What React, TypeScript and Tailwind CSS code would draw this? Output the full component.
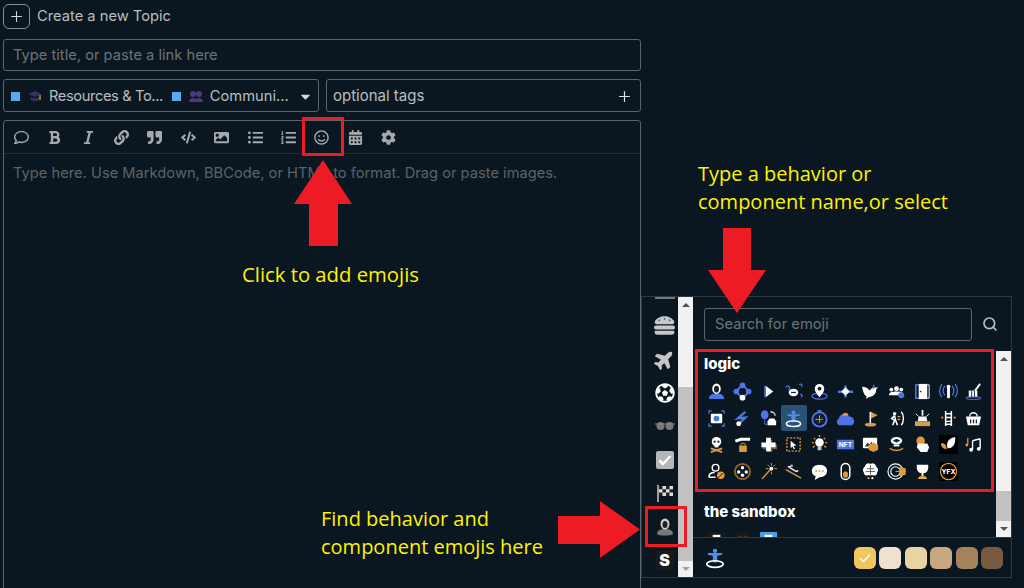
import type { ReactNode } from 'react';
import {
  FaRegComment, FaBold, FaItalic, FaLink, FaQuoteRight, FaCode, FaImage, FaListUl, FaListOl, FaRegSmile,
  FaCalendarAlt, FaCog, FaHamburger, FaPlane, FaFutbol, FaCaretDown,
} from 'react-icons/fa';
import { FiSearch } from 'react-icons/fi';
import { Plus } from 'lucide-react';

const B = '#4f74e8';
const O = '#e09a3a';
const W = '#ffffff';

function Svg({ children, s = 20 }: { children: ReactNode; s?: number }) {
  return <svg width={s} height={s} viewBox="0 0 20 20">{children}</svg>;
}

const Pedestal = () => (
  <>
    <circle cx="10" cy="3.5" r="2" fill="#4f8fe8" />
    <path d="M3.5 5.5 L16.5 5.5 L16.5 7 L12 8 L12 14 L8 14 L8 8 L3.5 7 Z" fill="#4f8fe8" />
    <ellipse cx="10" cy="15.5" rx="7.5" ry="3" fill="none" stroke={W} strokeWidth="1.5" />
  </>
);

const row1: ReactNode[] = [
  <><path d="M2 18c0-5 4-6 8-6s8 1 8 6z" fill={B} /><ellipse cx="10" cy="7" rx="4.5" ry="5.5" fill={W} /><ellipse cx="10" cy="7.5" rx="2.6" ry="3.6" fill="#16202a" /></>,
  <><path d="M10 3l7 7-7 7-7-7z" fill="none" stroke={B} strokeWidth="2" /><circle cx="10" cy="3.5" r="3" fill={B} /><circle cx="3.5" cy="10" r="3" fill={B} /><circle cx="16.5" cy="10" r="3" fill={B} /><circle cx="10" cy="16.5" r="3" fill={W} /></>,
  <><path d="M7 4l8 6-8 6z" fill={W} /><path d="M5.500 4h1.500v12H5.500z" fill={B} /></>,
  <><ellipse cx="10" cy="11" rx="5" ry="4" fill={W} /><path d="M7.5 11h5" stroke="#16202a" strokeWidth="1.3" /><path d="M2 6a2 2 0 1 1 3 2v1M16 3a1.5 1.5 0 1 1 2 2M17 13a1.5 1.5 0 1 1 1 3" fill="none" stroke={B} strokeWidth="1.3" /></>,
  <><ellipse cx="10" cy="15" rx="8" ry="3" fill="none" stroke={B} strokeWidth="1.2" /><path d="M10 16c-3-4-5-6-5-9a5 5 0 0 1 10 0c0 3-2 5-5 9z" fill={W} /><circle cx="10" cy="7" r="2" fill="#16202a" /></>,
  <><path d="M10 3l2 3H8z" fill={B} /><path d="M10 17l2-3H8z" fill={B} /><rect x="2" y="9" width="16" height="2.6" fill={B} /><path d="M10 5.5l4.5 4.5-4.5 4.5L5.5 10z" fill={W} /></>,
  <><path d="M1 5c3 0 6 1 8 4l4-4 3 1 2-1-2 3c0 5-4 8-8 8l-3 2 1-3C3 14 2 9 1 5z" fill={W} /><path d="M13 2l2 4-3 2z" fill={B} /></>,
  <><circle cx="10" cy="7" r="2.5" fill={W} /><circle cx="4.5" cy="8" r="2" fill={W} /><circle cx="15" cy="8" r="2" fill={W} /><path d="M2 14c0-3 3-4 8-4s7 1 7 3v1z" fill={W} /><circle cx="15" cy="14" r="3.2" fill={B} /></>,
  <><path d="M6 3H3v14h3" fill="none" stroke={B} strokeWidth="1.6" /><rect x="6" y="2" width="9" height="16" fill={W} /><circle cx="8" cy="10" r="0.9" fill="#16202a" /><path d="M15 3h2v14h-2" fill="none" stroke={W} strokeWidth="1" /></>,
  <><rect x="8.5" y="6" width="3" height="11" rx="1" fill={W} /><circle cx="10" cy="5" r="2" fill={W} /><path d="M6 4c-2 3-2 7 0 10M14 4c2 3 2 7 0 10M3 2c-3 5-3 10 0 14M17 2c3 5 3 10 0 14" fill="none" stroke={B} strokeWidth="1.3" /></>,
  <><path d="M17 2l-6 8" stroke={W} strokeWidth="2" /><rect x="5" y="9" width="9" height="7" fill={W} /><path d="M8 9v7M11 9v7" stroke="#16202a" /><ellipse cx="10" cy="17" rx="8" ry="1.5" fill="none" stroke={B} /></>,
];

const row2: ReactNode[] = [
  <><path d="M2 5V2h3M15 2h3v3M2 15v3h3M18 15v3h-3" fill="none" stroke={B} strokeWidth="1.3" /><rect x="4" y="5" width="12" height="10" rx="1" fill={W} /><circle cx="10" cy="10" r="3" fill="#3d7fd8" /></>,
  <><path d="M13 3L5 10l8-1-6 6" fill="none" stroke={B} strokeWidth="2.4" /><circle cx="6" cy="15.5" r="2.6" fill={W} /></>,
  <><ellipse cx="6" cy="6" rx="4" ry="4.8" fill={B} /><path d="M6 11v5h3" fill="none" stroke={B} /><path d="M12 3c3 0 5 2 5 4" fill="none" stroke={W} strokeWidth="1.2" /><path d="M9 13l2-3h5l2 3v4H9z" fill={W} /></>,
  <Pedestal />,
  <><circle cx="10" cy="11" r="7.5" fill="none" stroke={B} strokeWidth="2" /><circle cx="10" cy="11" r="5" fill="#1b2330" /><path d="M6 11h8M10 7v8" stroke={W} strokeWidth="1" strokeDasharray="1 1" /><rect x="8" y="1" width="4" height="2" fill={B} /></>,
  <><path d="M3 17a4 4 0 0 1 0-7 6 6 0 0 1 11-2 5 5 0 0 1 3 9z" fill={B} /><path d="M7 7a3 3 0 0 1 6 0z" fill={O} /></>,
  <><rect x="9" y="3" width="1.6" height="13" fill={W} /><path d="M10.5 3l7 3.5-7 3.5z" fill={O} /><ellipse cx="10" cy="16.5" rx="6" ry="2" fill={O} /></>,
  <><path d="M15 3c3 3 3 11 0 14" fill="none" stroke={W} strokeWidth="1.5" /><circle cx="8" cy="5" r="1.8" fill={W} /><path d="M8 7l-3 3 3 2-2 5M8 7l1 5 2 5" fill="none" stroke={W} strokeWidth="1.6" /><path d="M11 8h3M11 11h3" stroke={O} strokeWidth="1.4" /></>,
  <><path d="M10 1v6" stroke={W} strokeWidth="1.8" /><path d="M6 8h8l1 5H5z" fill={W} /><rect x="2" y="13" width="16" height="5" fill="#d2a050" /><path d="M3 5l3 3M17 5l-3 3" stroke={W} /></>,
  <><path d="M7 2v16M13 2v16" stroke={W} strokeWidth="1.6" /><path d="M7 5h6M7 9h6M7 13h6M7 16h6" stroke={W} strokeWidth="1.5" /><circle cx="3.5" cy="9" r="1.2" fill={O} /><circle cx="16.5" cy="9" r="1.2" fill={O} /></>,
  <><path d="M6 8a4 4 0 0 1 8 0" fill="none" stroke={W} strokeWidth="1.5" /><path d="M2 8h16l-2 9H4z" fill={W} /><path d="M7 11v4M10 11v4M13 11v4" stroke="#16202a" strokeWidth="1.3" /></>,
];

const row3: ReactNode[] = [
  <><path d="M4 14l12 4M16 14L4 18" stroke={O} strokeWidth="2" /><circle cx="10" cy="7" r="5" fill={W} /><rect x="8" y="10" width="4" height="3" fill={W} /><circle cx="8" cy="7" r="1.2" fill="#16202a" /><circle cx="12" cy="7" r="1.2" fill="#16202a" /></>,
  <><path d="M2 5l6-2h10v3H9L3 8z" fill={W} /><path d="M8 11a2.5 2.5 0 0 1 5 0" fill="none" stroke={O} /><rect x="6.5" y="11" width="8" height="7" rx="1" fill={O} /></>,
  <><path d="M8 5h6v5h5v5h-5v3H8v-3H4v-5h4z" fill="#7a5a3c" /><path d="M7.5 3h5v5h5v5h-5v4h-5v-4h-5V8h5z" fill={W} /></>,
  <><rect x="3" y="3" width="14" height="14" fill="none" stroke={O} strokeWidth="1.5" strokeDasharray="2 1.5" /><path d="M7 6l6 5-3 .5 1.6 3-1.3.6-1.5-3L7 14z" fill={W} /></>,
  <><circle cx="10" cy="8" r="4.5" fill={W} /><rect x="8" y="12" width="4" height="4" fill="#c0c4c8" /><path d="M10 0v2M2 8h2M16 8h2M4 3l1.500 1.500M16 3l-1.500 1.500M3 13l2-1.500M17 13l-2-1.500" stroke={O} strokeWidth="1.4" /></>,
  <><rect x="1" y="5" width="18" height="10" fill={B} /><text x="10" y="12.800" textAnchor="middle" fontSize="7" fontWeight="700" fill={W} fontFamily="Inter, sans-serif">NFT</text></>,
  <><rect x="2" y="3" width="15" height="11" rx="1" fill={W} /><path d="M4 12l3-4 2 2 2-3 3 5z" fill="#333" /><path d="M13 8l5 2.500v5L13 18l-5-2.500v-5z" fill={O} /></>,
  <><ellipse cx="10" cy="6" rx="6" ry="4" fill={W} /><path d="M6 6l4-2 4 2-4 2z" fill="#16202a" /><path d="M7 10h6v2H7z" fill={W} /><path d="M3 14c3 3 11 3 14 0" fill="none" stroke={O} strokeWidth="1.500" /></>,
  <><circle cx="8" cy="6" r="4.500" fill={O} /><path d="M5 9h10l2 4-2 5H8l-4-5z" fill={W} /></>,
  <><rect width="20" height="20" fill="#000" /><path d="M17 2C11 3 7 7 9 14c5 0 9-4 8-12z" fill={W} /><path d="M2 9c4-1 6 2 6 6-3 0-6-2-6-6z" fill={O} /></>,
  <><path d="M9 6v9M17 4v10M9 6l8-2" fill="none" stroke={W} strokeWidth="1.500" /><circle cx="7.500" cy="15.500" r="2" fill={W} /><circle cx="15.500" cy="14.500" r="2" fill={W} /><path d="M4 3v7" stroke={O} strokeWidth="1.300" /><circle cx="3" cy="10.500" r="1.500" fill={O} /></>,
];

const row4: ReactNode[] = [
  <><circle cx="9" cy="6" r="3.500" fill="none" stroke={W} strokeWidth="1.500" /><path d="M2 16c0-4 3-5 6-5" fill="none" stroke={W} strokeWidth="1.500" /><path d="M2 16h7" stroke={W} strokeWidth="1.500" /><circle cx="14.500" cy="14" r="4" fill={O} /><path d="M12 16.500l5-5" stroke="#16202a" /></>,
  <><circle cx="10" cy="10" r="8" fill="none" stroke="#96602c" strokeWidth="2" /><circle cx="10" cy="6" r="1.800" fill={W} /><circle cx="6" cy="10.500" r="1.800" fill={W} /><circle cx="14" cy="10.500" r="1.800" fill={W} /><circle cx="10" cy="14" r="1.800" fill={W} /></>,
  <><path d="M3 18L12 8" stroke="#c99540" strokeWidth="1.500" /><circle cx="13" cy="7" r="2" fill={W} /><path d="M13 1v3M13 10v3M7 7h3M16 7h3M9 3l2 2M17 3l-2 2" stroke={O} strokeWidth="1" /></>,
  <><path d="M2 8l16 9" stroke="#c99540" strokeWidth="1.500" /><circle cx="8" cy="4" r="1.500" fill="#aab" /><path d="M6 6l7 4 2-1M4 5l3 0" stroke={W} strokeWidth="1.500" fill="none" /></>,
  <><path d="M10 3c5 0 8 3 8 6.500S15 16 10 16l-5 3 1-4C3 14 2 12 2 9.500 2 6 5 3 10 3z" fill={W} /><circle cx="6.500" cy="9.500" r="1" fill={O} /><circle cx="10" cy="9.500" r="1" fill={O} /><circle cx="13.500" cy="9.500" r="1" fill={O} /></>,
  <><rect x="5.500" y="1.500" width="9" height="17" rx="4.500" fill="none" stroke={W} strokeWidth="1.600" /><rect x="7.500" y="10" width="5" height="6.500" rx="2" fill={O} /></>,
  <><path d="M10 2a4 4 0 0 0-6 3 4 4 0 0 0-1 6 3 3 0 0 0 4 3h6a3 3 0 0 0 4-3 4 4 0 0 0-1-6 4 4 0 0 0-6-3z" fill={W} /><path d="M10 3v10M6 7h8M5 10h10" stroke="#444" strokeWidth="0.800" /><circle cx="8" cy="17" r="1.200" fill={O} /><circle cx="12" cy="17" r="1.200" fill={W} /></>,
  <><circle cx="9" cy="10" r="8" fill="none" stroke={W} strokeWidth="1.200" /><circle cx="9" cy="10" r="5" fill="none" stroke={W} strokeWidth="1.200" /><path d="M9 10h11M14 6v8l5-1V7z" stroke={O} fill={O} strokeWidth="1.300" /></>,
  <><path d="M4 3h12v3c0 4-3 6-6 6S4 10 4 6z" fill={W} /><rect x="9" y="11" width="2" height="4" fill={W} /><path d="M5 18l2-3h6l2 3z" fill="#e6b04a" /></>,
  <><rect width="20" height="20" fill="#000" /><circle cx="10" cy="10" r="8.500" fill="none" stroke={O} strokeWidth="1.300" /><text x="10" y="12.800" textAnchor="middle" fontSize="7" fontWeight="800" fill={W} fontFamily="Inter, sans-serif">YFX</text></>,
];

const sandbox: ReactNode[] = [
  <><rect x="1" y="1" width="18" height="18" rx="1" fill="#1a1a1a" /><rect x="6" y="4" width="8" height="10" fill={W} /></>,
  <><circle cx="10" cy="10" r="9" fill="#1b1b1b" /><circle cx="7" cy="7" r="1.500" fill="#555" /><circle cx="13" cy="7" r="1.500" fill="#555" /></>,
  <><rect x="1" y="1" width="18" height="18" rx="1" fill="#4f9fe0" /><rect x="6" y="4" width="8" height="9" fill={W} /></>,
];

const toolbar = [FaRegComment, FaBold, FaItalic, FaLink, FaQuoteRight, FaCode, FaImage, FaListUl, FaListOl, FaRegSmile, FaCalendarAlt, FaCog];
const swatches = ['#f0c75e', '#f1dfcf', '#e8d3a2', '#c9a77f', '#a5825c', '#775a3f'];
const field = 'border border-[#5c656b] rounded-[3px]';

function Category({ cap, name, labelClass }: { cap: boolean; name: string; labelClass: string }) {
  return (
    <div className="flex items-center whitespace-nowrap">
      <span className="w-[9px] h-[9px] bg-[#5aa9ee] mr-[7px]" />
      <svg width="16" height="16" viewBox="0 0 16 16" className="mr-[6px]">
        {cap ? (
          <>
            <path d="M1 6l7-3 7 3-7 3z" fill="#3a2f57" />
            <path d="M4 9v3c2 1.500 6 1.500 8 0V9l-4 1.500z" fill="#3a2f57" />
            <path d="M13 7v5" stroke="#d9a441" strokeWidth="1.300" />
          </>
        ) : (
          <>
            <circle cx="5" cy="6" r="3" fill="#4b3a78" />
            <circle cx="11" cy="6" r="3" fill="#4b3a78" />
            <path d="M1 14c0-3 2-4 4-4s3 1 3 1 1-1 3-1 4 1 4 4z" fill="#4b3a78" />
          </>
        )}
      </svg>
      <span className={`text-[14.700px] text-[#b9bdc0] ${labelClass}`}>{name}</span>
    </div>
  );
}

function Arrow({ className, w, h, points }: { className: string; w: number; h: number; points: string }) {
  return (
    <svg width={w} height={h} viewBox={`0 0 ${w} ${h}`} className={`absolute ${className}`}>
      <polygon points={points} fill="#ed1c24" />
    </svg>
  );
}

function SideIcon({ children }: { children: ReactNode }) {
  return <div className="h-[33.500px] flex items-center justify-center text-[#c4c6c7]">{children}</div>;
}

function Picker() {
  return (
    <div className="absolute left-[641px] top-[296px] w-[371px] h-[282px] flex bg-[#0a1720] border border-[#31393f]">
      <div className="w-[36px] overflow-hidden pl-[9px]">
        <div className="-mt-[21.500px]">
          <SideIcon><div className="w-[20px] h-[13px] bg-[#777] mt-[1px]" /></SideIcon>
          <SideIcon><FaHamburger size={21} /></SideIcon>
          <SideIcon><FaPlane size={21} className="-rotate-45" /></SideIcon>
          <SideIcon><FaFutbol size={20} className="text-white" /></SideIcon>
          <SideIcon>
            <svg width="20" height="20" viewBox="0 0 20 20">
              <circle cx="5.500" cy="10" r="4" fill="#777" />
              <circle cx="14.500" cy="10" r="4" fill="#777" />
              <path d="M0 8h20" stroke="#888" />
            </svg>
          </SideIcon>
          <SideIcon>
            <svg width="20" height="20" viewBox="0 0 20 20">
              <rect x="1" y="1" width="18" height="18" rx="2" fill="#b4b6b7" />
              <path d="M4.500 10.500l3.500 3.500 7.500-8" fill="none" stroke="#fff" strokeWidth="2.500" />
            </svg>
          </SideIcon>
          <SideIcon>
            <svg width="20" height="20" viewBox="0 0 20 20">
              <path d="M3 2v17" stroke="#ccc" strokeWidth="1.500" />
              <path d="M4 3h14v10H4z" fill="#ddd" />
              <path d="M4 3h3.500v3.300H4zM11 3h3.500v3.300H11zM7.500 6.300H11v3.300H7.500zM14.500 6.300H18v3.300h-3.500zM4 9.600h3.500V13H4zM11 9.600h3.500V13H11z" fill="#222" />
            </svg>
          </SideIcon>
          <SideIcon>
            <svg width="20" height="20" viewBox="0 0 20 20">
              <path d="M2 17c0-4 4-5 8-5s8 1 8 5c-2 2-14 2-16 0z" fill="#777" />
              <ellipse cx="10" cy="7" rx="4.500" ry="5.500" fill="#ccc" />
              <ellipse cx="10" cy="7.500" rx="2.500" ry="3.500" fill="#222" />
            </svg>
          </SideIcon>
          <SideIcon>
            <div className="w-[18px] h-[18px] bg-[#1a1a1a] flex items-center justify-center text-white font-black text-[16px] font-['Inter',sans-serif]">S</div>
          </SideIcon>
        </div>
      </div>
      <div className="w-[15px] bg-[#f1f1f1] flex flex-col items-center">
        <div className="h-[16px] flex items-center"><span className="border-x-[4px] border-x-transparent border-b-[4px] border-b-[#505050]" /></div>
        <div className="w-full h-[74px]" />
        <div className="w-full flex-1 bg-[#c1c1c1]" />
        <div className="h-[16px] flex items-center"><span className="border-x-[4px] border-x-transparent border-t-[4px] border-t-[#a3a3a3]" /></div>
      </div>
      <div className="flex-1 flex flex-col min-w-0">
        <div className="h-[54px] flex items-center pl-[11px] shrink-0">
          <div className={`w-[268px] h-[33px] flex items-center pl-[10px] text-[14.700px] text-[#6d7377] ${field}`}>Search for emoji</div>
          <FiSearch size={16} className="ml-[10px] text-[#b9bdc0]" strokeWidth={2.500} />
        </div>
        <div className="flex-1 flex min-h-0">
          <div className="flex-1 overflow-hidden pl-[11px] min-w-0">
            <div className="text-[15px] font-extrabold text-white mt-[4px] leading-[17px]">logic</div>
            <div className="grid grid-cols-[repeat(11,25.700px)] auto-rows-[26.700px] mt-[6px]">
              {[...row1, ...row2, ...row3, ...row4].map((e, i) => (
                <div key={i} className={`flex items-center justify-center rounded-[2px] ${i === 14 ? 'bg-[#2b5275]' : ''}`}>
                  <Svg s={19}>{e}</Svg>
                </div>
              ))}
            </div>
            <div className="text-[15px] font-extrabold text-white mt-[18px] leading-[17px]">the sandbox</div>
            <div className="flex mt-[11px]">
              {sandbox.map((e, i) => (
                <div key={i} className="w-[25.700px] flex justify-center"><Svg s={19}>{e}</Svg></div>
              ))}
            </div>
          </div>
          <div className="w-[15px] bg-[#f1f1f1] flex flex-col items-center shrink-0">
            <div className="h-[16px] flex items-center"><span className="border-x-[4px] border-x-transparent border-b-[4px] border-b-[#505050]" /></div>
            <div className="flex-1" />
            <div className="w-full h-[30px] bg-[#c1c1c1]" />
            <div className="h-[16px] flex items-center"><span className="border-x-[4px] border-x-transparent border-t-[4px] border-t-[#505050]" /></div>
          </div>
        </div>
        <div className="h-[40px] shrink-0 border-t border-[#31393f] flex items-center justify-between pl-[11px] pr-[8px] bg-[#0a1720]">
          <Svg s={22}><Pedestal /></Svg>
          <div className="flex gap-[3.500px]">
            {swatches.map((c, i) => (
              <div key={c} className="w-[22px] h-[22px] rounded-[6px] flex items-center justify-center" style={{ backgroundColor: c }}>
                {i === 0 && (
                  <svg width="14" height="14" viewBox="0 0 14 14"><path d="M2 7.500l3.500 3L12 3.500" fill="none" stroke="#fff" strokeWidth="1.500" /></svg>
                )}
              </div>
            ))}
          </div>
        </div>
      </div>
    </div>
  );
}

export default function App() {
  return (
    <div className="relative w-[1024px] h-[588px] overflow-hidden bg-[#0a1720] font-['Inter',sans-serif]">
      <div className="w-[641px] h-[640px] pl-[3px] pt-[4px] flex flex-col">
        <div className="flex items-center h-[25px]">
          <div className="w-[27px] h-[25px] rounded-[6px] border border-[#8a9094] flex items-center justify-center text-[#d5d7d8]">
            <Plus size={17} strokeWidth={1.500} />
          </div>
          <span className="ml-[7px] text-[14.700px] text-[#b9bdc0]">Create a new Topic</span>
        </div>
        <div className={`mt-[10px] h-[32px] flex items-center pl-[9px] text-[14.700px] text-[#6d7377] ${field}`}>Type title, or paste a link here</div>
        <div className="mt-[8px] flex gap-[7px] h-[33px]">
          <div className={`w-[316px] flex items-center pl-[7px] pr-[12px] pt-[2px] gap-[9px] ${field}`}>
            <Category cap name="Resources & To..." labelClass="tracking-[-0.400px]" />
            <Category cap={false} name="Communi..." labelClass="" />
            <FaCaretDown size={15} className="ml-auto shrink-0 text-[#d5d7d8]" />
          </div>
          <div className={`flex-1 flex items-center justify-between pl-[6px] pr-[7px] pt-[2px] text-[15px] text-[#b9bdc0] ${field}`}>
            optional tags
            <Plus size={17} strokeWidth={1.700} className="text-[#e0e2e3]" />
          </div>
        </div>
        <div className={`mt-[8px] flex-1 ${field}`}>
          <div className="h-[33px] flex items-center pl-[0.700px] border-b border-[#262f35] text-[#a6a9ab]">
            {toolbar.map((Icon, i) => (
              <div key={i} className="w-[33.400px] flex justify-center"><Icon size={15} /></div>
            ))}
          </div>
          <div className="pl-[9px] pt-[8px] text-[14.700px] text-[#5c6367]">Type here. Use Markdown, BBCode, or HTML to format. Drag or paste images.</div>
        </div>
      </div>

      <Picker />

      <div className="absolute left-[302px] top-[117px] w-[42px] h-[39px] border-[3px] border-[#ed1c24]" />
      <div className="absolute left-[695px] top-[349px] w-[299px] h-[143px] border-[3px] border-[#ed1c24]" />
      <div className="absolute left-[645px] top-[506px] w-[42px] h-[41px] border-[3px] border-[#ed1c24]" />

      <Arrow className="left-[294px] top-[160px]" w={58} h={86} points="29,0 58,44 44,44 44,86 15,86 15,44 0,44" />
      <Arrow className="left-[708px] top-[228px]" w={58} h={85} points="15,0 43,0 43,42 58,42 29,85 0,42 15,42" />
      <Arrow className="left-[558px] top-[501px]" w={82} h={57} points="0,15 42,15 42,0 82,28.500 42,57 42,43 0,43" />

      <div className="absolute left-[242px] top-[260px] text-[20.300px] leading-[28px] text-[#fff200] font-['Open_Sans',sans-serif]">Click to add emojis</div>
      <div className="absolute left-[698px] top-[160px] text-[20px] leading-[28px] text-[#fff200] font-['Open_Sans',sans-serif]">Type a behavior or<br />component name,or select</div>
      <div className="absolute left-[321px] top-[505px] text-[20px] leading-[28px] text-[#fff200] font-['Open_Sans',sans-serif]">Find behavior and<br />component emojis here</div>
    </div>
  );
}
